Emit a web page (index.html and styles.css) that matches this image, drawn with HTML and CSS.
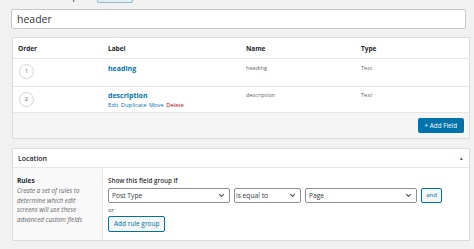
FILE: index.html
```html
<!DOCTYPE html>
<html lang="en">
<head>
    <meta charset="UTF-8">
    <meta name="viewport" content="width=device-width, initial-scale=1.0">
    <title>Edit Field Group</title>
    <link rel="stylesheet" href="styles.css">
</head>
<body>
    <div class="page">
        <!-- title row, mostly scrolled out of view -->
        <div class="title-row">
            <h1>Edit Field Group</h1>
            <span class="btn-light title-btn">Add New</span>
        </div>

        <input type="text" class="title-input" value="header">

        <!-- fields -->
        <div class="box">
            <div class="grid head">
                <div class="cell">Order</div>
                <div class="cell">Label</div>
                <div class="cell">Name</div>
                <div class="cell">Type</div>
            </div>
            <div class="grid row">
                <div class="cell"><span class="order">1</span></div>
                <div class="cell"><a href="#" class="label">heading</a></div>
                <div class="cell meta">heading</div>
                <div class="cell meta">Text</div>
            </div>
            <div class="grid row last">
                <div class="cell"><span class="order">2</span></div>
                <div class="cell">
                    <a href="#" class="label">description</a>
                    <div class="actions">
                        <a href="#">Edit</a>
                        <a href="#">Duplicate</a>
                        <a href="#">Move</a>
                        <a href="#" class="delete">Delete</a>
                    </div>
                </div>
                <div class="cell meta">description</div>
                <div class="cell meta">Text</div>
            </div>
            <div class="box-footer">
                <span class="btn-primary">+ Add Field</span>
            </div>
        </div>

        <!-- location -->
        <div class="box location">
            <div class="box-head">
                <span>Location</span>
                <span class="toggle">&#9652;</span>
            </div>
            <div class="loc-body">
                <div class="loc-label">
                    <div class="rules">Rules</div>
                    <p>Create a set of rules to determine which edit screens will use these advanced custom fields</p>
                </div>
                <div class="loc-rules">
                    <div class="show-if">Show this field group if</div>
                    <div class="rule">
                        <div class="select sel-param">Post Type
                            <svg viewBox="0 0 10 10"><path d="M2.5 3.5 L5 6 L7.5 3.5" fill="none" stroke="#555" stroke-width="1.3"/></svg>
                        </div>
                        <div class="select sel-op">is equal to
                            <svg viewBox="0 0 10 10"><path d="M2.5 3.5 L5 6 L7.5 3.5" fill="none" stroke="#555" stroke-width="1.3"/></svg>
                        </div>
                        <div class="select sel-val">Page
                            <svg viewBox="0 0 10 10"><path d="M2.5 3.5 L5 6 L7.5 3.5" fill="none" stroke="#555" stroke-width="1.3"/></svg>
                        </div>
                        <span class="btn-light and-btn">and</span>
                    </div>
                    <div class="or">or</div>
                    <span class="btn-light group-btn">Add rule group</span>
                </div>
            </div>
        </div>
    </div>
</body>
</html>
```

FILE: styles.css
```css
* {
    margin: 0;
    padding: 0;
    box-sizing: border-box;
}

body {
    font-family: 'Open Sans', 'Noto Sans', sans-serif;
    background: #f1f1f1;
    color: #23282d;
    overflow: hidden;
}

a {
    text-decoration: none;
}

.page {
    width: 470px;
    padding-left: 11px;
    margin-top: -22px;
}

.title-row {
    display: flex;
    align-items: flex-end;
    gap: 10px;
    height: 25px;
}

h1 {
    font-size: 9px;
    font-weight: 400;
    color: #23282d;
    line-height: 11px;
    margin-bottom: 1px;
    width: 76px;
}

.btn-light {
    display: inline-block;
    background: #f3f5f6;
    border: 1px solid #0071a1;
    border-radius: 2px;
    color: #0071a1;
    font-size: 7px;
    line-height: 13px;
    padding: 0 6px;
}

.title-btn {
    height: 12px;
    width: 36px;
    border-color: #8bb8cc;
    background: #e1eef4;
    color: #e1eef4;
    font-size: 1px;
    line-height: 1px;
}

.title-input {
    display: block;
    width: 455px;
    height: 20px;
    margin-top: 6px;
    padding: 0 5px;
    border: 1px solid #c7c7c7;
    border-radius: 2px;
    font-family: inherit;
    font-size: 10.5px;
    color: #32373c;
    background: #fff;
}

.box {
    margin: 8px 0 0 1px;
    width: 458px;
    background: #fff;
    border: 1px solid #dcdcde;
}

.grid {
    display: grid;
    grid-template-columns: 90px 138px 115px 1fr;
}

.cell {
    padding-left: 5px;
}

.head {
    height: 21px;
    align-items: center;
    font-size: 6.5px;
    font-weight: 700;
    border-bottom: 1px solid #e6e6e6;
}

.row {
    height: 28px;
    padding-top: 4px;
    border-bottom: 1px solid #e6e6e6;
    font-size: 7px;
    line-height: 11px;
}

.row.last {
    height: 26px;
    padding-top: 3px;
}

.order {
    display: inline-flex;
    justify-content: center;
    align-items: center;
    width: 15px;
    height: 15px;
    margin-top: 1px;
    margin-left: 1px;
    border: 1px solid #d5d5d5;
    border-radius: 50%;
    font-size: 6px;
    color: #666;
}

.row.last .order {
    margin-top: 2px;
}

.label {
    font-weight: 700;
    color: #0073aa;
    font-size: 7px;
    line-height: 11px;
}

.meta {
    font-size: 5.6px;
    color: #666;
    line-height: 11px;
}

.actions {
    font-size: 5.8px;
    line-height: 9px;
}

.actions a {
    color: #0073aa;
    margin-right: 1px;
}

.actions .delete {
    color: #a00;
}

.box-footer {
    height: 25px;
    background: #f5f5f5;
    display: flex;
    justify-content: flex-end;
    align-items: center;
    padding-right: 5px;
}

.btn-primary {
    display: inline-block;
    background: #0073aa;
    color: #fff;
    font-size: 6.3px;
    line-height: 15px;
    padding: 0 7px;
    border-radius: 2px;
}

.location {
    margin-top: 9px;
}

.box-head {
    display: flex;
    justify-content: space-between;
    align-items: center;
    height: 19px;
    padding: 0 6px 0 5px;
    border-bottom: 1px solid #e6e6e6;
    font-size: 7px;
    font-weight: 600;
}

.toggle {
    font-size: 5px;
    color: #555;
}

.loc-body {
    display: grid;
    grid-template-columns: 90px 1fr;
    height: 72px;
}

.loc-label {
    background: #f9f9f9;
    border-right: 1px solid #e6e6e6;
    padding: 8px 5px 0 4px;
}

.rules {
    font-size: 6.5px;
    font-weight: 700;
    line-height: 10px;
}

.loc-label p {
    font-size: 6.3px;
    font-style: italic;
    color: #666;
    line-height: 9.5px;
}

.loc-rules {
    padding: 8px 5px 0 5px;
    font-size: 6px;
    line-height: 10px;
}

.show-if {
    font-size: 6.3px;
    font-weight: 600;
    color: #333;
}

.rule {
    display: flex;
    align-items: center;
    gap: 4px;
    margin-top: 2px;
}

.select {
    position: relative;
    height: 15px;
    border: 1px solid #8c8f94;
    border-radius: 2px;
    background: #fff;
    font-size: 6.7px;
    line-height: 13px;
    padding-left: 3px;
    color: #32373c;
}

.select svg {
    position: absolute;
    right: 3px;
    top: 2px;
    width: 9px;
    height: 9px;
}

.sel-param {
    width: 122px;
}

.sel-op {
    width: 67px;
    padding-left: 1px;
}

.sel-val {
    width: 112px;
}

.and-btn {
    height: 15px;
    width: 21px;
    padding: 0;
    text-align: center;
    font-size: 6px;
}

.or {
    color: #555;
    margin-top: 2px;
}

.group-btn {
    display: block;
    width: fit-content;
    margin-top: 1px;
    height: 16px;
    line-height: 14px;
    font-size: 6.5px;
    padding: 0 5px;
}
```
